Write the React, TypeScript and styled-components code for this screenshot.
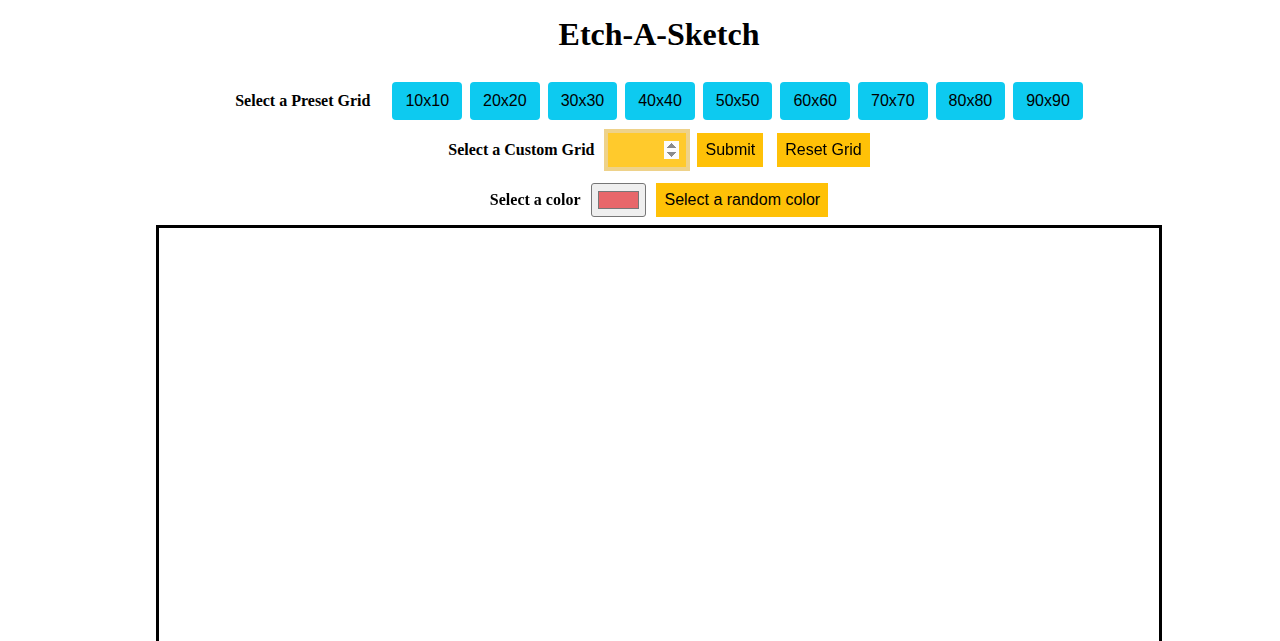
import { createGlobalStyle } from "styled-components";
import styled from "styled-components";

const GlobalStyle = createGlobalStyle`
    html, body {
        margin: 0;
        padding: 0;
        background: #fff;
    }
    body {
        font-family: "Liberation Serif", "Times New Roman", serif;
        color: #000;
    }
`;

const presets = [10, 20, 30, 40, 50, 60, 70, 80, 90];

const Page = styled.div`
    display: flex;
    flex-direction: column;
    align-items: center;
    padding-left: 38px;
`;

const Title = styled.h1`
    margin: 16px 0 0;
    font-size: 32px;
    line-height: 37px;
    font-weight: 700;
`;

const Controls = styled.div`
    display: flex;
    flex-direction: column;
    align-items: center;
    margin-top: 29px;
`;

const Row = styled.div<{ $gap: number; $mt?: number }>`
    display: flex;
    align-items: center;
    gap: ${({ $gap }) => $gap}px;
    margin-top: ${({ $mt }) => $mt ?? 0}px;
`;

const Label = styled.span<{ $mr?: number }>`
    font-size: 16px;
    font-weight: 700;
    margin-right: ${({ $mr }) => $mr ?? 0}px;
`;

const PresetButton = styled.button`
    font-family: "Liberation Sans", Arial, sans-serif;
    font-size: 16px;
    line-height: 18px;
    height: 38px;
    width: 69.6px;
    padding: 0;
    border: none;
    border-radius: 4px;
    background: #0dcaf0;
    color: #000;
`;

const Button = styled.button<{ $ml?: number }>`
    font-family: "Liberation Sans", Arial, sans-serif;
    font-size: 16px;
    line-height: 18px;
    height: 34px;
    padding: 0 8px;
    border: none;
    border-radius: 0;
    background: #ffc107;
    color: #000;
    margin-left: ${({ $ml }) => $ml ?? 0}px;
`;

const NumberInput = styled.input`
    box-sizing: border-box;
    width: 78px;
    height: 34px;
    margin-left: 4px;
    padding: 0 7px 0 8px;
    border: none;
    background: #ffca2c;
    box-shadow: 0 0 0 4px #eed28a;
    font-family: "Liberation Sans", Arial, sans-serif;
    font-size: 16px;
    outline: none;
    caret-color: #000;
`;

const ColorInput = styled.input`
    box-sizing: border-box;
    width: 55px;
    height: 34px;
    padding: 0;
    border: 1px solid #767676;
    border-radius: 3px;
    background: #efefef;

    &::-webkit-color-swatch-wrapper {
        padding: 7px 6px;
    }
    &::-webkit-color-swatch {
        border: 1px solid #777;
    }
`;

const Canvas = styled.div`
    margin-top: 8px;
    width: 1000px;
    height: 1000px;
    border: 3px solid #000;
    background: #fff;
`;

export default function App() {
    return (
        <>
            <GlobalStyle />
            <Page>
                <Title>Etch-A-Sketch</Title>
                <Controls>
                    <Row $gap={8}>
                        <Label $mr={14}>Select a Preset Grid</Label>
                        {presets.map((n) => (
                            <PresetButton key={n}>{`${n}x${n}`}</PresetButton>
                        ))}
                    </Row>
                    <Row $gap={10} $mt={13}>
                        <Label>Select a Custom Grid</Label>
                        <NumberInput type="number" autoFocus />
                        <Button $ml={1}>Submit</Button>
                        <Button $ml={4}>Reset Grid</Button>
                    </Row>
                    <Row $gap={10} $mt={16}>
                        <Label $mr={1}>Select a color</Label>
                        <ColorInput type="color" defaultValue="#e8676a" />
                        <Button>Select a random color</Button>
                    </Row>
                </Controls>
                <Canvas />
            </Page>
        </>
    );
}
